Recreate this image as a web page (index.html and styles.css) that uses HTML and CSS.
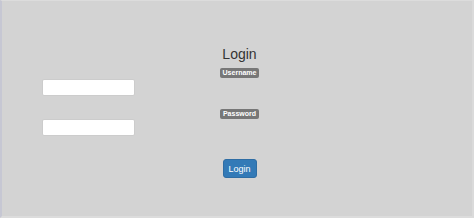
FILE: index.html
```html
<!DOCTYPE html>
<html lang="en">
<head>
  <meta charset="UTF-8">
  <meta name="viewport" content="width=device-width, initial-scale=1.0">
  <title>Login</title>
  <link rel="stylesheet" href="styles.css">
</head>
<body>
  <div class="page">
    <h1>Login</h1>

    <!-- Username -->
    <div class="field">
      <span class="badge">Username</span>
      <input type="text" id="username">
    </div>

    <!-- Password -->
    <div class="field field-password">
      <span class="badge">Password</span>
      <input type="password" id="password">
    </div>

    <button class="login-button">Login</button>
  </div>
</body>
</html>
```

FILE: styles.css
```css
html, body {
  margin: 0;
  padding: 0;
  height: 100%;
}

body {
  font-family: 'Liberation Sans', Arial, sans-serif;
  background-color: #d3d3d3;
  color: #333;
}

.page {
  box-sizing: border-box;
  height: 218px;
  display: flex;
  flex-direction: column;
  align-items: center;
  padding-top: 46px;
  padding-left: 5px;
  border-top: 1px solid #dcdcdc;
  border-right: 2px solid #dadada;
  border-bottom: 2px solid #dcdcdc;
  border-left: 2px solid #c6c7d3;
}

h1 {
  font-size: 14px;
  line-height: 16px;
  font-weight: normal;
  margin: 0;
  margin-top: -1px;
}

.field {
  width: 100%;
  display: flex;
  flex-direction: column;
  margin-top: 6px;
}

.field-password {
  margin-top: 13px;
}

.badge {
  align-self: center;
  background-color: #777;
  color: white;
  font-size: 7px;
  line-height: 8px;
  font-weight: bold;
  padding: 1px 3px;
  border-radius: 2px;
}

.field input {
  align-self: flex-start;
  box-sizing: border-box;
  width: 93px;
  height: 17px;
  margin: 1px 0 0 35px;
  padding: 2px 4px;
  border: 1px solid #ccc;
  border-radius: 2px;
  background: white;
}

.field-password input {
  margin-top: 0;
}

.login-button {
  box-sizing: border-box;
  margin-top: 23px;
  width: 34px;
  height: 19px;
  padding: 0;
  font-family: 'Liberation Sans', Arial, sans-serif;
  font-size: 9px;
  color: white;
  background-color: #337ab7;
  border: 1px solid #2e6da4;
  border-radius: 3px;
  cursor: pointer;
}
```
